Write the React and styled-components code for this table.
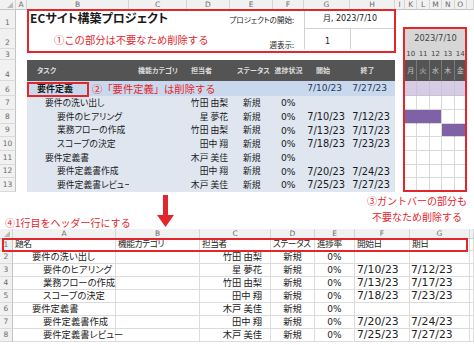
import React from 'react';
import styled, { createGlobalStyle } from 'styled-components';

const RED = '#e3252c';
const JP = '"Noto Sans CJK JP", "Noto Sans", sans-serif';
const NUM = '"DejaVu Sans", "Noto Sans CJK JP", sans-serif';
const TASK_BG = '#dfe6f0';
const GROUP_BG = '#c9d8ec';
const DARK = '#545454';
const GANTT_GRAY = '#d6d6d6';
const LAVENDER = '#d6cce4';
const BAR = '#7f62a6';

const GlobalStyle = createGlobalStyle`
  html, body { margin: 0; padding: 0; background: #fff; }
  * { box-sizing: border-box; }
`;

const Page = styled.div`
  position: relative;
  width: 474px;
  height: 345px;
  overflow: hidden;
  background: #fff;
  font-family: ${JP};
  font-feature-settings: "palt";
  display: flex;
  flex-direction: column;
`;

const Sheet = styled.section`
  display: flex;
  flex-direction: column;
`;

const Gap = styled.div`
  height: ${p => p.$h}px;
  flex: none;
`;

const TopRow = styled.div`
  display: grid;
  grid-template-columns: 16px 11px 102px 58px 43px 43px 31px 46px 45px 10px repeat(5, 12.4px) 1fr;
  height: ${p => p.$h}px;
`;

const BottomRow = styled.div`
  display: grid;
  grid-template-columns: 13px 103px 84px 71px 44px 40px 55px 60px 1fr;
  height: ${p => p.$h}px;
`;

const ColLetter = styled.div`
  display: flex;
  align-items: center;
  justify-content: center;
  background: #f1f1f1;
  color: #6b6b6b;
  font-family: ${NUM};
  font-size: 7.5px;
  line-height: 1;
  border-right: 1px solid #d5d5d5;
  border-bottom: 1px solid #c4c4c4;
`;

const Corner = styled(ColLetter)`
  position: relative;
  &::after {
    content: '';
    position: absolute;
    right: 2px;
    bottom: 1px;
    border-style: solid;
    border-width: 0 0 6px 6px;
    border-color: transparent transparent #bcbcbc transparent;
  }
`;

const RowNum = styled.div`
  display: flex;
  align-items: flex-end;
  justify-content: center;
  padding-bottom: ${p => p.$pb ?? 2}px;
  background: #f1f1f1;
  color: #6b6b6b;
  font-family: ${NUM};
  font-size: 7.5px;
  line-height: 1;
  border-right: 1px solid #c4c4c4;
  border-bottom: 1px solid #dadada;
`;

const Cell = styled.div`
  grid-column: ${p => p.$span || 'auto'};
  display: flex;
  align-items: ${p => p.$v || 'center'};
  justify-content: ${p => p.$justify || 'flex-start'};
  padding: 0 ${p => p.$pr || 0}px ${p => p.$pb || 0}px ${p => p.$pl || 0}px;
  background: ${p => p.$bg || 'transparent'};
  color: ${p => p.$color || '#1a1a1a'};
  font-family: ${p => (p.$num ? NUM : JP)};
  font-size: ${p => p.$fs || 9}px;
  font-weight: ${p => (p.$bold ? 700 : 400)};
  letter-spacing: ${p => p.$ls || 0}px;
  line-height: 1;
  white-space: nowrap;
  min-width: 0;
`;

const InputCell = styled(Cell)`
  border-left: 1px solid #d2d2d2;
  border-bottom: ${p => (p.$bottom ? '1px solid #d2d2d2' : 'none')};
`;

const HeadCell = styled(Cell)`
  background: ${DARK};
  color: #dcdcdc;
  font-weight: 700;
  font-size: 7px;
`;

const GanttCell = styled.div`
  grid-column: ${p => p.$span || 'auto'};
  display: flex;
  align-items: center;
  justify-content: center;
  background: ${p => p.$bg || '#fff'};
  color: ${p => p.$color || '#444'};
  font-family: ${p => (p.$num ? NUM : JP)};
  font-size: ${p => p.$fs || 7.5}px;
  line-height: 1;
  white-space: nowrap;
  border-right: 1px solid ${p => p.$line || 'transparent'};
  border-bottom: 1px solid ${p => p.$lineB || p.$line || 'transparent'};
`;

const GridCell = styled(Cell)`
  border-right: 1px solid #dcdcdc;
  border-bottom: 1px solid #dcdcdc;
  color: #222;
`;

const RedBox = styled.div`
  position: absolute;
  left: ${p => p.$x}px;
  top: ${p => p.$y}px;
  width: ${p => p.$w}px;
  height: ${p => p.$h}px;
  border: 2px solid ${RED};
  pointer-events: none;
`;

const Note = styled.div`
  position: absolute;
  left: ${p => p.$x}px;
  top: ${p => p.$y}px;
  width: ${p => (p.$w ? `${p.$w}px` : 'auto')};
  text-align: ${p => p.$align || 'left'};
  color: ${RED};
  font-family: ${JP};
  font-feature-settings: normal;
  font-size: ${p => p.$fs || 10.3}px;
  line-height: ${p => p.$lh || 12}px;
  white-space: nowrap;
`;

const ArrowSvg = styled.svg`
  position: absolute;
  left: 157px;
  top: 195px;
`;

const days = ['10', '11', '12', '13', '14'];
const dayNames = ['月', '火', '水', '木', '金'];

const tasks = [
  { name: '要件の洗い出し', level: 1, owner: '竹田 由梨', start: '', end: '' },
  { name: '要件のヒアリング', level: 2, owner: '星 夢花', start: '7/10/23', end: '7/12/23', bar: [0, 3] },
  { name: '業務フローの作成', level: 2, owner: '竹田 由梨', start: '7/13/23', end: '7/17/23', bar: [3, 5] },
  { name: 'スコープの決定', level: 2, owner: '田中 翔', start: '7/18/23', end: '7/23/23' },
  { name: '要件定義書', level: 1, owner: '木戸 美佳', start: '', end: '' },
  { name: '要件定義書作成', level: 2, owner: '田中 翔', start: '7/20/23', end: '7/24/23' },
  { name: '要件定義書レビュー', level: 2, owner: '木戸 美佳', start: '7/25/23', end: '7/27/23' },
];

const taskHeights = [14, 14, 13, 14, 14, 13, 14];
const topLetters = ['A', 'B', 'C', 'D', 'E', 'F', 'G', 'H', 'I', 'K', 'L', 'M', 'N', 'O', ''];
const bottomLetters = ['A', 'B', 'C', 'D', 'E', 'F', 'G', ''];
const bottomHeaders = ['題名', '機能カテゴリ', '担当者', 'ステータス', '進捗率', '開始日', '期日'];

function GanttDays({ bar }) {
  return days.map((d, i) => {
    const filled = bar && i >= bar[0] && i < bar[1];
    const nextFilled = bar && i + 1 >= bar[0] && i + 1 < bar[1];
    return (
      <GanttCell
        key={d}
        $bg={filled ? BAR : '#fff'}
        $line={filled && nextFilled ? BAR : '#d9d9d9'}
        $lineB="#d9d9d9"
      />
    );
  });
}

function TopSheet() {
  return (
    <Sheet>
      <TopRow $h={10}>
        <Corner />
        {topLetters.map((l, i) => (
          <ColLetter key={i}>{l}</ColLetter>
        ))}
      </TopRow>

      <TopRow $h={19}>
        <RowNum>1</RowNum>
        <Cell />
        <Cell $span="3 / 6" $bold $fs={12} $pl={3} $pb={4}>ECサイト構築プロジェクト</Cell>
        <Cell $span="6 / 8" $justify="flex-end" $pr={10} $fs={7.5}>プロジェクトの開始:</Cell>
        <InputCell $span="8 / 10" $justify="center" $num $fs={8} $bottom>月, 2023/7/10</InputCell>
        <Cell $span="10 / 17" />
      </TopRow>

      <TopRow $h={20}>
        <RowNum>2</RowNum>
        <Cell />
        <Cell $span="3 / 6" />
        <Cell $span="6 / 8" $justify="flex-end" $v="flex-end" $pr={10} $pb={1} $fs={7.5}>週表示:</Cell>
        <InputCell $justify="center" $v="flex-end" $pb={3} $num $fs={8}>1</InputCell>
        <InputCell />
        <Cell />
        <GanttCell $span="11 / 16" $bg={GANTT_GRAY} $num $fs={8.3}>2023/7/10</GanttCell>
        <Cell />
      </TopRow>

      <TopRow $h={11}>
        <RowNum $pb={1}>3</RowNum>
        <Cell />
        <Cell $span="3 / 10" />
        <Cell />
        {days.map(d => (
          <GanttCell key={d} $bg={GANTT_GRAY} $num $fs={7}>{d}</GanttCell>
        ))}
        <Cell />
      </TopRow>

      <TopRow $h={21}>
        <RowNum>4</RowNum>
        <Cell />
        <HeadCell $pl={10}>タスク</HeadCell>
        <HeadCell $justify="center">機能カテゴリ</HeadCell>
        <HeadCell $pl={4}>担当者</HeadCell>
        <HeadCell $pl={7}>ステータス</HeadCell>
        <HeadCell $justify="center">進捗状況</HeadCell>
        <HeadCell $justify="center" $pr={8}>開始</HeadCell>
        <HeadCell $justify="center" $pr={10}>終了</HeadCell>
        <Cell />
        {dayNames.map(d => (
          <GanttCell key={d} $bg={DARK} $color="#c4c4c4" $fs={7} $line="#7a7a7a" $lineB={DARK}>{d}</GanttCell>
        ))}
        <Cell />
      </TopRow>

      <TopRow $h={15}>
        <RowNum>6</RowNum>
        <Cell />
        <Cell $bg={GROUP_BG} $bold $fs={9} $pl={10}>要件定義</Cell>
        <Cell $span="4 / 8" $bg={GROUP_BG} />
        <Cell $bg={GROUP_BG} $justify="flex-end" $pr={8} $num $fs={9} $color="#1f3864">7/10/23</Cell>
        <Cell $bg={GROUP_BG} $justify="flex-end" $pr={8} $num $fs={9} $color="#1f3864">7/27/23</Cell>
        <Cell />
        {days.map(d => (
          <GanttCell key={d} $bg={LAVENDER} $line="#cbc0dc" />
        ))}
        <Cell />
      </TopRow>

      {tasks.map((t, i) => (
        <TopRow key={t.name} $h={taskHeights[i]}>
          <RowNum $pb={3}>{7 + i}</RowNum>
          <Cell />
          <Cell $bg={TASK_BG} $pl={t.level === 1 ? 18 : 30} $fs={8.8}>{t.name}</Cell>
          <Cell $bg={TASK_BG} />
          <Cell $bg={TASK_BG} $justify="flex-end" $pr={2} $fs={8.8}>{t.owner}</Cell>
          <Cell $bg={TASK_BG} $pl={13} $fs={8.8}>新規</Cell>
          <Cell $bg={TASK_BG} $pl={8} $num $fs={9.2}>0%</Cell>
          <Cell $bg={TASK_BG} $justify="flex-end" $pr={5} $num $fs={9.8}>{t.start}</Cell>
          <Cell $bg={TASK_BG} $justify="flex-end" $pr={5} $num $fs={9.8}>{t.end}</Cell>
          <Cell />
          <GanttDays bar={t.bar} />
          <Cell />
        </TopRow>
      ))}
    </Sheet>
  );
}

function BottomSheet() {
  return (
    <Sheet>
      <BottomRow $h={10}>
        <Corner />
        {bottomLetters.map((l, i) => (
          <ColLetter key={i}>{l}</ColLetter>
        ))}
      </BottomRow>

      <BottomRow $h={12}>
        <RowNum $pb={2}>1</RowNum>
        {bottomHeaders.map(h => (
          <GridCell key={h} $pl={2} $fs={8.7} $ls={-0.4}>{h}</GridCell>
        ))}
        <GridCell />
      </BottomRow>

      {tasks.map((t, i) => (
        <BottomRow key={t.name} $h={13}>
          <RowNum $pb={3}>{2 + i}</RowNum>
          <GridCell $pl={t.level === 1 ? 19 : 30} $fs={9.3}>{t.name}</GridCell>
          <GridCell />
          <GridCell $justify="flex-end" $pr={8} $fs={9.3}>{t.owner}</GridCell>
          <GridCell $justify="center" $fs={9.3}>新規</GridCell>
          <GridCell $justify="center" $num $fs={9}>0%</GridCell>
          <GridCell $pl={2} $num $fs={10.8}>{t.start}</GridCell>
          <GridCell $pl={1} $num $fs={10.8}>{t.end}</GridCell>
          <GridCell />
        </BottomRow>
      ))}
    </Sheet>
  );
}

export default function App() {
  return (
    <>
      <GlobalStyle />
      <Page>
        <TopSheet />
        <Gap $h={37} />
        <BottomSheet />

        <RedBox $x={27} $y={9} $w={369} $h={44} />
        <Note $x={54} $y={34}>①この部分は不要なため削除する</Note>

        <RedBox $x={27} $y={82} $w={62} $h={15} />
        <Note $x={92} $y={83}>②「要件定義」は削除する</Note>

        <RedBox $x={403} $y={27} $w={64} $h={165} />
        <Note $x={362} $y={193} $w={110} $align="center" $fs={10} $lh={16}>
          ③ガントバーの部分も
          <br />
          不要なため削除する
        </Note>

        <ArrowSvg width="18" height="33" viewBox="0 0 18 33">
          <rect x="6" y="0" width="5" height="21" fill={RED} />
          <polygon points="0,20 17,20 8.5,32" fill={RED} />
        </ArrowSvg>

        <Note $x={5} $y={217} $fs={10}>④1行目をヘッダー行にする</Note>

        <RedBox $x={2} $y={238} $w={466} $h={14} />
      </Page>
    </>
  );
}
